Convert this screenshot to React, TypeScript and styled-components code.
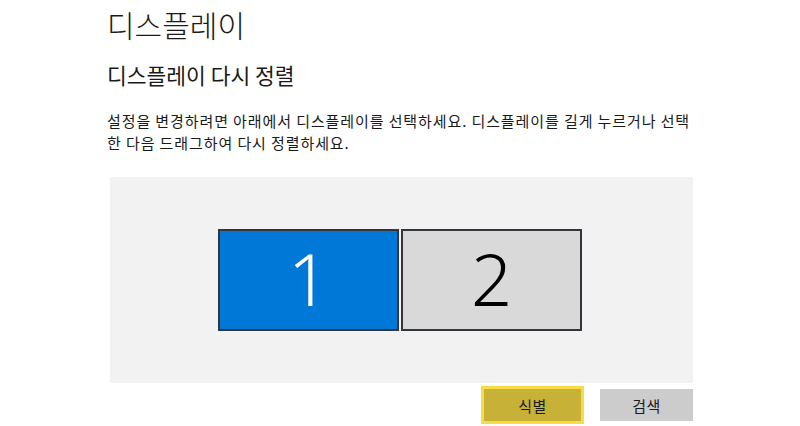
import React from 'react';
import styled, { createGlobalStyle } from 'styled-components';

const GlobalStyle = createGlobalStyle`
  html, body {
    margin: 0;
    padding: 0;
    background: #ffffff;
  }
  body {
    font-family: "Noto Sans CJK KR", "Noto Sans", sans-serif;
    color: #000000;
  }
`;

const Page = styled.div`
  width: 800px;
  height: 426px;
  box-sizing: border-box;
  padding: 6px 0 0 107px;
  overflow: hidden;
`;

const Title = styled.h1`
  margin: 0;
  font-size: 30px;
  line-height: 36px;
  font-weight: 300;
  color: #1a1a1a;
`;

const Subtitle = styled.h2`
  margin: 19px 0 0;
  font-size: 21.5px;
  line-height: 28px;
  font-weight: 400;
  color: #1a1a1a;
`;

const Description = styled.p`
  margin: 21px 0 0;
  font-size: 15px;
  letter-spacing: 0.9px;
  line-height: 22px;
  color: #1a1a1a;
  white-space: nowrap;
`;

const Canvas = styled.div`
  margin: 23px 0 0 3px;
  width: 583px;
  height: 206px;
  background: #f2f2f2;
  display: flex;
  align-items: center;
  justify-content: center;
  gap: 2px;
`;

const Monitor = styled.div<{ $selected?: boolean }>`
  width: 181px;
  height: 102px;
  box-sizing: border-box;
  border: 2px solid #30363b;
  background: ${({ $selected }) => ($selected ? '#0078d7' : '#d9d9d9')};
  color: ${({ $selected }) => ($selected ? '#ffffff' : '#000000')};
  display: flex;
  align-items: center;
  justify-content: center;
  padding-bottom: 4px;
  font-family: "Noto Sans", "DejaVu Sans", sans-serif;
  font-weight: 300;
  font-size: 72px;
  line-height: 1;
  margin-left: ${({ $selected }) => ($selected ? '-3px' : '0')};
`;

const ButtonRow = styled.div`
  width: 586px;
  display: flex;
  justify-content: flex-end;
  align-items: center;
  gap: 16px;
  margin-top: 3px;
`;

const Button = styled.button<{ $focused?: boolean }>`
  box-sizing: border-box;
  height: ${({ $focused }) => ($focused ? '38px' : '32px')};
  width: ${({ $focused }) => ($focused ? '103px' : '93px')};
  border: ${({ $focused }) => ($focused ? '3px solid #f8dc45' : 'none')};
  background: ${({ $focused }) => ($focused ? '#c8b137' : '#cccccc')};
  color: #1a1a1a;
  font-family: "Noto Sans CJK KR", "Noto Sans", sans-serif;
  font-size: 15px;
  letter-spacing: 0.5px;
  padding: 0;
  cursor: pointer;
`;

export default function App() {
  return (
    <>
      <GlobalStyle />
      <Page>
        <Title>디스플레이</Title>
        <Subtitle>디스플레이 다시 정렬</Subtitle>
        <Description>
          설정을 변경하려면 아래에서 디스플레이를 선택하세요. 디스플레이를 길게 누르거나 선택
          <br />
          한 다음 드래그하여 다시 정렬하세요.
        </Description>
        <Canvas>
          <Monitor $selected>1</Monitor>
          <Monitor>2</Monitor>
        </Canvas>
        <ButtonRow>
          <Button $focused>식별</Button>
          <Button>검색</Button>
        </ButtonRow>
      </Page>
    </>
  );
}
